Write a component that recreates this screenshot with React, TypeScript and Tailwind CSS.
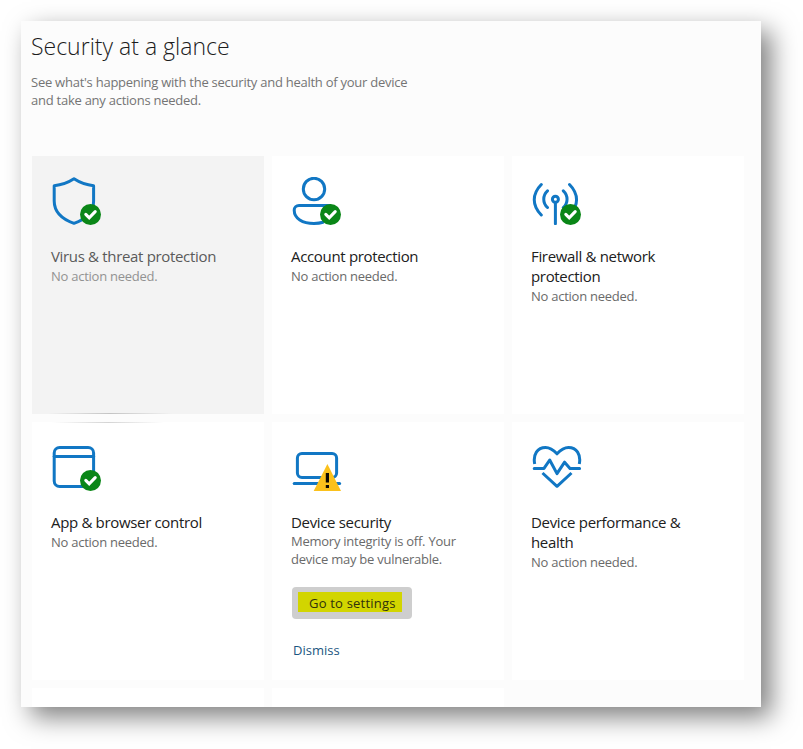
import React from 'react';

type Status = 'ok' | 'warning' | 'none';

interface Tile {
  id: string;
  title: string[];
  text: string[];
  icon: React.ReactNode;
  status: Status;
  hovered?: boolean;
  action?: string;
  dismiss?: string;
}

const tiles: Tile[] = [
  {
    id: 'virus',
    title: ['Virus & threat protection'],
    text: ['No action needed.'],
    status: 'ok',
    hovered: true,
    icon: (
      <path d="M22 1.8C16.5 5.4 9.5 8 2.2 8.7V24c0 11 8 18.2 19.8 22.3C33.8 42.2 41.6 35 41.6 24V8.7C34.5 8 27.5 5.4 22 1.8Z" />
    ),
  },
  {
    id: 'account',
    title: ['Account protection'],
    text: ['No action needed.'],
    status: 'ok',
    icon: (
      <>
        <circle cx="22" cy="12" r="10.7" />
        <path d="M38 28.5H7a4.8 4.8 0 0 0-4.8 4.8C2.2 41.5 10.5 46.5 22 46.5c3.5 0 6.5-.4 9-1.2" />
      </>
    ),
  },
  {
    id: 'firewall',
    title: ['Firewall & network', 'protection'],
    text: ['No action needed.'],
    status: 'ok',
    icon: (
      <>
        <circle cx="23.4" cy="22.3" r="3" />
        <path d="M23.4 25.5V46.7M9.3 7.5C-.1 17-.1 28.5 9.3 38M15.5 13.8c-5 4.7-5 12 0 16.7M31.3 13.8c5 4.7 5 12 0 16.7M37.5 7.5c9.4 9.5 9.4 21 0 30.5" />
      </>
    ),
  },
  {
    id: 'browser',
    title: ['App & browser control'],
    text: ['No action needed.'],
    status: 'ok',
    icon: (
      <>
        <rect x="2.2" y="4.4" width="39.4" height="39.2" rx="5.5" />
        <path d="M2.2 13.4h39.4" />
      </>
    ),
  },
  {
    id: 'device',
    title: ['Device security'],
    text: ['Memory integrity is off. Your', 'device may be vulnerable.'],
    status: 'warning',
    action: 'Go to settings',
    dismiss: 'Dismiss',
    icon: (
      <>
        <rect x="5.4" y="10.4" width="39.2" height="24" rx="4.5" />
        <path d="M2.2 40.4h45.4" />
      </>
    ),
  },
  {
    id: 'health',
    title: ['Device performance &', 'health'],
    text: ['No action needed.'],
    status: 'none',
    icon: (
      <>
        <path strokeLinecap="butt" d="M2.7 21C.8 11.5 5.5 4.4 13.5 4.4c4.5 0 7.500 2 11.5 6.4 4-4.4 7-6.4 11.5-6.4C44.500 4.4 49.2 11.5 47.3 21" />
        <path d="M2.2 25.4H12l5.7-8.4L25 30.600l7.6-11.4 5.4 6.2h9.6" />
        <path strokeLinecap="butt" d="M10.5 30 25 43.3 39.5 30" />
      </>
    ),
  },
];

function StatusBadge({ status }: { status: Status }) {
  if (status === 'ok') {
    return (
      <>
        <circle cx="38.5" cy="37.5" r="10.5" fill="#0a8617" stroke="none" />
        <path d="M33.8 37.4l3.4 3.4 6-6.2" stroke="#fff" strokeWidth="3.1" strokeLinecap="round" strokeLinejoin="miter" />
      </>
    );
  }
  if (status === 'warning') {
    return (
      <g stroke="none">
        <path d="M35.4 21 49 48H21.7Z" fill="#fbc11c" />
        <path d="M33.8 30h3.2v9.5h-3.2ZM33.8 42h3.2v3h-3.2Z" fill="#0c0903" />
      </g>
    );
  }
  return null;
}

function SecurityTile({ tile }: { tile: Tile }) {
  const titleColor = tile.hovered ? 'text-[#5a5a5a]' : 'text-[#202020]';
  const textColor = tile.hovered ? 'text-[#929292]' : 'text-[#6a6a6a]';

  return (
    <div className={`relative h-[258px] pl-[19px] pt-[21px] ${tile.hovered ? 'z-10 bg-[#f3f3f3]' : 'bg-white'}`}>
      <svg
        className="ml-px block h-12 w-[50px]"
        viewBox="0 0 50 48"
        fill="none"
        stroke="#1177c4"
        strokeWidth="3"
        strokeLinecap="round"
        strokeLinejoin="round"
      >
        {tile.icon}
        <StatusBadge status={tile.status} />
      </svg>
      <h2 className={`mt-[21px] text-[15px] leading-5 tracking-[-0.33px] ${titleColor}`}>
        {tile.title.map((line) => (
          <span key={line} className="block whitespace-nowrap">{line}</span>
        ))}
      </h2>
      <p className={`text-[13px] leading-[18px] tracking-[-0.25px] ${tile.action ? '' : 'mt-px'} ${textColor}`}>
        {tile.text.map((line) => (
          <span key={line} className="block whitespace-nowrap">{line}</span>
        ))}
      </p>
      {tile.action && (
        <button className="ml-px mt-[19px] flex h-8 w-[120px] items-center rounded bg-[#cecece] pl-[6px]">
          <span className="-mt-0.5 block h-5 w-[104px] whitespace-nowrap bg-[#d2d500] pl-[11px] text-left text-[13px] leading-[22px] tracking-[0.2px] text-[#30310c]">
            {tile.action}
          </span>
        </button>
      )}
      {tile.dismiss && (
        <a className="mt-[22px] block pl-0.5 text-[13px] leading-[18px] text-[#1b5580]">{tile.dismiss}</a>
      )}
      {tile.hovered && (
        <>
          <div className="absolute bottom-0 left-4 h-px w-[124px] bg-linear-to-r from-transparent via-[#c4c4c4] to-transparent" />
          <div className="absolute -bottom-[9px] left-5 h-px w-[112px] bg-linear-to-r from-transparent via-[#d4d4d4] to-transparent" />
        </>
      )}
    </div>
  );
}

export default function App() {
  return (
    <div className="h-[749px] w-[803px] overflow-hidden bg-white p-[21px] font-['Open_Sans','Noto_Sans',sans-serif]">
      <main className="h-[686px] w-[740px] bg-[#fcfcfc] shadow-[10px_10px_24px_rgba(0,0,0,0.5)]">
        <div className="h-full overflow-hidden pl-[11px]">
          <header className="-ml-px h-[135px] pt-[9px]">
            <h1 className="text-[23px] font-light leading-8 text-[#1c1c1c]">Security at a glance</h1>
            <p className="mt-[11px] text-[13px] leading-[18px] tracking-[-0.25px] text-[#747474]">
              See what's happening with the security and health of your device
              <br />
              and take any actions needed.
            </p>
          </header>
          <section className="grid grid-cols-[232px_232px_232px] gap-2">
            {tiles.map((tile) => (
              <SecurityTile key={tile.id} tile={tile} />
            ))}
            <div className="h-[258px] bg-white" />
            <div className="h-[258px] bg-white" />
          </section>
        </div>
      </main>
    </div>
  );
}
